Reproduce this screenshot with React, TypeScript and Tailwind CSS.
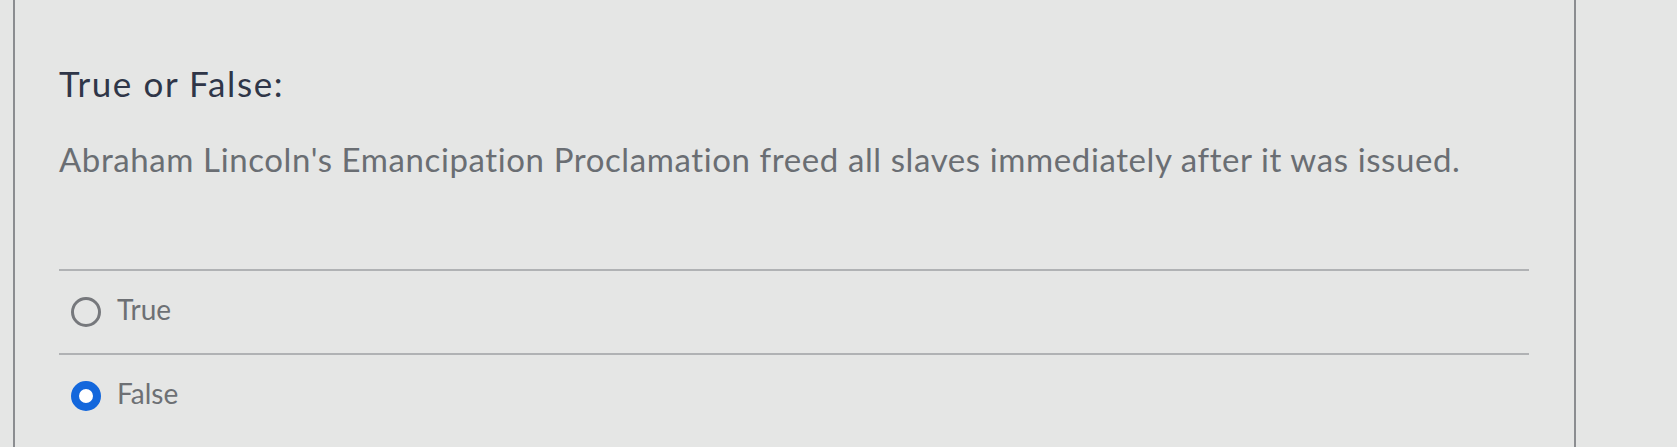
import React from "react";

const OPTIONS = [
  { id: "true", label: "True", checked: false },
  { id: "false", label: "False", checked: true },
];

function Radio({ checked }: { checked: boolean }) {
  if (checked) {
    return (
      <span className="box-border block h-[30px] w-[30px] shrink-0 rounded-full border-[8px] border-[#1367dc] bg-white" />
    );
  }
  return (
    <span className="box-border block h-[30px] w-[30px] shrink-0 rounded-full border-[3px] border-[#76787c]" />
  );
}

export default function App() {
  return (
    <main
      className="flex h-[447px] w-full overflow-hidden bg-[#e5e6e5]"
      style={{ fontFamily: "Lato, 'Open Sans', sans-serif" }}
    >
      <div className="w-[13px] shrink-0" />
      {/* Question card */}
      <section className="w-[1563px] shrink-0 border-x-2 border-[#8b8d90] px-[44px] pt-[63px]">
        <h2 className="text-[35px] leading-[41px] tracking-[1.6px] text-[#2f3648]">True or False:</h2>
        <p className="mt-[35px] text-[33px] leading-[40px] tracking-[0.6px] text-[#6a6e73]">
          Abraham Lincoln's Emancipation Proclamation freed all slaves immediately after it was issued.
        </p>

        <div className="mt-[90px] mr-[1px]">
          {OPTIONS.map((opt) => (
            <div key={opt.id} className="box-border flex h-[84px] items-center gap-[16px] border-t-2 border-[#b0b2b4] pl-[12px]">
              <Radio checked={opt.checked} />
              <span className="mb-[6px] text-[28px] leading-[34px] text-[#6d7074]">{opt.label}</span>
            </div>
          ))}
        </div>
      </section>
      <div className="flex-1" />
    </main>
  );
}
